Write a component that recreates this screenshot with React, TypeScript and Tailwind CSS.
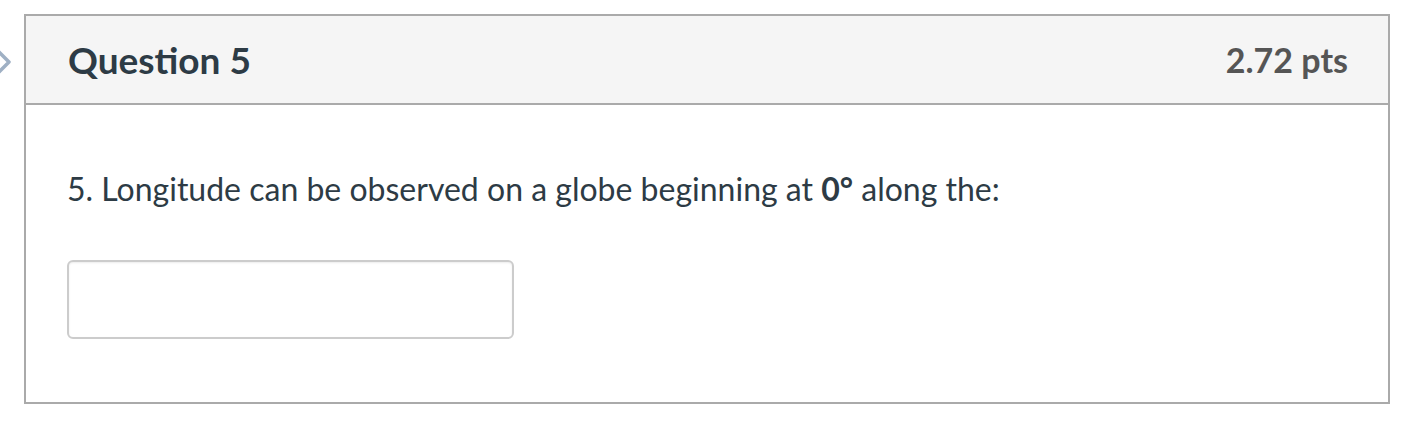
import React from 'react';

export default function App() {
  return (
    <div className="flex h-[446px] w-[1426px] bg-white pt-[14px] font-['Lato','Liberation_Sans',sans-serif]">
      {/* cut-off flag marker at the left edge */}
      <div className="w-[24px] shrink-0 pt-[34px]">
        <svg width="14" height="28" viewBox="0 0 14 28" className="blur-[0.7px]">
          <path d="M-3 2 L9 14 L-3 26" fill="none" stroke="#9fb0c4" strokeWidth="3.5" strokeLinejoin="round" />
        </svg>
      </div>

      <div className="h-[390px] w-[1366px] border-2 border-[#aaaaaa]">
        <div className="flex h-[89px] items-center justify-between border-b-2 border-[#aaaaaa] bg-[#f5f5f5] pl-[42px] pr-[40px]">
          <h2 className="text-[37px] font-bold text-[#2d3b45]">Question 5</h2>
          <span className="text-[34px] font-bold text-[#555555]">2.72 pts</span>
        </div>

        <div className="px-[41px] pt-[64px]">
          <p className="text-[32px] leading-[40px] text-[#2d3b45]">
            5. Longitude can be observed on a globe beginning at <strong className="font-bold">0°</strong> along the:
          </p>
          <input
            type="text"
            className="mt-[51px] h-[79px] w-[447px] rounded-[6px] border-2 border-[#cccccc] bg-white shadow-[inset_0_1px_2px_rgba(0,0,0,0.08)] outline-none"
          />
        </div>
      </div>
    </div>
  );
}
